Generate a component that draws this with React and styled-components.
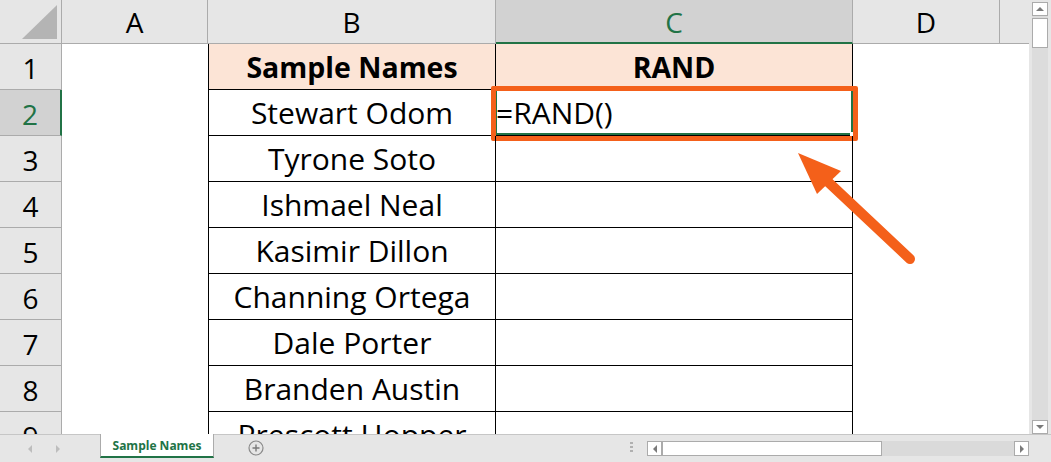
import React from 'react';
import styled, { createGlobalStyle, css } from 'styled-components';

const GlobalStyle = createGlobalStyle`
  html, body { margin: 0; padding: 0; background: #e6e6e6; }
  body { font-family: "Open Sans", "Liberation Sans", sans-serif; }
`;

const ORANGE = '#f4601a';
const GREEN = '#217346';

const COLS = [
  { key: 'A', width: 146 },
  { key: 'B', width: 288 },
  { key: 'C', width: 357, selected: true },
  { key: 'D', width: 147 },
  { key: '', width: 29, last: true },
];

const NAMES = [
  'Stewart Odom',
  'Tyrone Soto',
  'Ishmael Neal',
  'Kasimir Dillon',
  'Channing Ortega',
  'Dale Porter',
  'Branden Austin',
  'Prescott Hopper',
];

const Window = styled.div`
  width: 1051px;
  height: 462px;
  display: flex;
  flex-direction: column;
  background: #e6e6e6;
  overflow: hidden;
`;

const Main = styled.div`
  display: flex;
  height: 434px;
`;

const Sheet = styled.div`
  position: relative;
  width: 1029px;
  height: 434px;
  overflow: hidden;
  background: #fff;
  display: grid;
  grid-template-columns: 62px ${COLS.map(c => c.width + 'px').join(' ')};
  grid-template-rows: 44px;
  grid-auto-rows: 46px;
`;

const Corner = styled.div`
  position: relative;
  background: #e6e6e6;
  border-right: 1px solid #ababab;
  border-bottom: 1px solid #ababab;
  &::after {
    content: '';
    position: absolute;
    right: 4px;
    bottom: 4px;
    width: 0;
    height: 0;
    border-left: 35px solid transparent;
    border-bottom: 34px solid #b4b4b4;
  }
`;

const ColHead = styled.div`
  display: flex;
  align-items: center;
  justify-content: center;
  background: ${p => (p.$selected ? '#d2d2d2' : '#e6e6e6')};
  color: ${p => (p.$selected ? GREEN : '#000')};
  border-right: ${p => (p.$last ? 'none' : '1px solid #ababab')};
  border-bottom: ${p => (p.$selected ? `2px solid ${GREEN}` : '1px solid #ababab')};
  font-size: 28px;
  padding-top: 1px;
`;

const RowHead = styled.div`
  display: flex;
  align-items: center;
  justify-content: center;
  background: ${p => (p.$selected ? '#d2d2d2' : '#e6e6e6')};
  color: ${p => (p.$selected ? GREEN : '#000')};
  border-right: ${p => (p.$selected ? `2px solid ${GREEN}` : '1px solid #ababab')};
  border-bottom: 1px solid #ababab;
  font-size: 28px;
  padding-top: 2px;
`;

const Cell = styled.div`
  position: relative;
  display: flex;
  align-items: center;
  justify-content: ${p => (p.$left ? 'flex-start' : 'center')};
  font-size: 30px;
  color: #000;
  white-space: nowrap;
  ${p => p.$table && css`
    border-right: 1px solid #000;
    border-bottom: 1px solid #000;
  `}
  ${p => p.$first && css`border-left: 1px solid #000;`}
  ${p => p.$head && css`
    background: #fce4d6;
    font-weight: 700;
    font-size: 28.5px;
    padding-top: 1px;
  `}
`;

const ActiveFrame = styled.div`
  position: absolute;
  inset: -1px -1px 0 -1px;
  border: 2px solid ${GREEN};
  pointer-events: none;
  &::after {
    content: '';
    position: absolute;
    right: -4px;
    bottom: -4px;
    width: 5px;
    height: 5px;
    background: #fff;
  }
`;

const Highlight = styled.div`
  position: absolute;
  left: -5px;
  right: -6px;
  top: -4px;
  bottom: -6px;
  border: 5px solid ${ORANGE};
  border-radius: 2px;
  pointer-events: none;
`;

const Arrow = styled.svg`
  position: absolute;
  left: 0;
  top: 0;
  pointer-events: none;
`;

const VScroll = styled.div`
  width: 16px;
  margin: 2px 0 0 3px;
  display: flex;
  flex-direction: column;
  background: #dcdcdc;
`;

const ScrollBtn = styled.div`
  width: 16px;
  height: 14px;
  box-sizing: border-box;
  background: #fff;
  border: 1px solid #ababab;
  display: flex;
  align-items: center;
  justify-content: center;
  flex: none;
`;

const Tri = styled.span`
  width: 0;
  height: 0;
  ${p => p.$dir === 'up' && css`
    border-left: 4px solid transparent;
    border-right: 4px solid transparent;
    border-bottom: 4px solid #7a7a7a;
  `}
  ${p => p.$dir === 'down' && css`
    border-left: 4px solid transparent;
    border-right: 4px solid transparent;
    border-top: 4px solid #7a7a7a;
  `}
  ${p => p.$dir === 'left' && css`
    border-top: 4px solid transparent;
    border-bottom: 4px solid transparent;
    border-right: 4px solid ${p.$color || '#7a7a7a'};
  `}
  ${p => p.$dir === 'right' && css`
    border-top: 4px solid transparent;
    border-bottom: 4px solid transparent;
    border-left: 4px solid ${p.$color || '#7a7a7a'};
  `}
`;

const VThumb = styled.div`
  height: 30px;
  margin-top: 2px;
  box-sizing: border-box;
  background: #fff;
  border: 1px solid #ababab;
`;

const Spacer = styled.div`
  flex: 1;
`;

const BottomBar = styled.div`
  height: 28px;
  display: flex;
  align-items: stretch;
  border-top: 1px solid #c6c6c6;
  box-sizing: border-box;
`;

const Nav = styled.div`
  width: 100px;
  display: flex;
  align-items: center;
  padding-left: 28px;
  gap: 24px;
  box-sizing: border-box;
`;

const Tab = styled.div`
  width: 114px;
  height: 24px;
  margin-top: -1px;
  box-sizing: border-box;
  background: #fff;
  border-left: 1px solid #ababab;
  border-right: 1px solid #ababab;
  border-bottom: 2px solid ${GREEN};
  color: ${GREEN};
  font-weight: 700;
  font-size: 12px;
  display: flex;
  align-items: center;
  justify-content: center;
`;

const AddBtn = styled.svg`
  margin: 5px 0 0 34px;
  flex: none;
`;

const Dots = styled.div`
  width: 3px;
  margin: 7px 14px 0 0;
  display: flex;
  flex-direction: column;
  gap: 2px;
  span {
    width: 3px;
    height: 2px;
    background: #b0b0b0;
  }
`;

const HScroll = styled.div`
  width: 382px;
  height: 15px;
  margin-top: 6px;
  display: flex;
  background: #dadada;
`;

const HBtn = styled(ScrollBtn)`
  width: 15px;
  height: 15px;
`;

const HThumb = styled.div`
  width: 220px;
  box-sizing: border-box;
  background: #fff;
  border: 1px solid #ababab;
`;

export default function App() {
  return (
    <Window>
      <GlobalStyle />
      <Main>
        <Sheet>
          <Corner />
          {COLS.map((c, i) => (
            <ColHead key={i} $selected={c.selected} $last={c.last}>{c.key}</ColHead>
          ))}

          <RowHead>1</RowHead>
          <Cell />
          <Cell $table $first $head>Sample Names</Cell>
          <Cell $table $head>RAND</Cell>
          <Cell />
          <Cell />

          {NAMES.map((name, i) => (
            <React.Fragment key={name}>
              <RowHead $selected={i === 0}>{i + 2}</RowHead>
              <Cell />
              <Cell $table $first>{name}</Cell>
              <Cell $table $left={i === 0}>
                {i === 0 && '=RAND()'}
                {i === 0 && <ActiveFrame />}
                {i === 0 && <Highlight />}
              </Cell>
              <Cell />
              <Cell />
            </React.Fragment>
          ))}

          <Arrow width="1029" height="434" viewBox="0 0 1029 434">
            <line x1="910" y1="259" x2="826" y2="180" stroke={ORANGE} strokeWidth="10" strokeLinecap="round" />
            <polygon points="798,153 841,171 817,194" fill={ORANGE} />
          </Arrow>
        </Sheet>

        <VScroll>
          <ScrollBtn><Tri $dir="up" /></ScrollBtn>
          <VThumb />
          <Spacer />
          <ScrollBtn><Tri $dir="down" /></ScrollBtn>
        </VScroll>
      </Main>

      <BottomBar>
        <Nav>
          <Tri $dir="left" $color="#bdbdbd" />
          <Tri $dir="right" $color="#bdbdbd" />
        </Nav>
        <Tab>Sample Names</Tab>
        <AddBtn width="16" height="16" viewBox="0 0 16 16">
          <circle cx="8" cy="8" r="7" fill="none" stroke="#8a8a8a" strokeWidth="1.2" />
          <path d="M8 4.5v7M4.5 8h7" stroke="#7a7a7a" strokeWidth="1.4" />
        </AddBtn>
        <Spacer />
        <Dots><span /><span /><span /></Dots>
        <HScroll>
          <HBtn><Tri $dir="left" /></HBtn>
          <HThumb />
          <Spacer />
          <HBtn><Tri $dir="right" /></HBtn>
        </HScroll>
        <div style={{ width: 22 }} />
      </BottomBar>
    </Window>
  );
}
